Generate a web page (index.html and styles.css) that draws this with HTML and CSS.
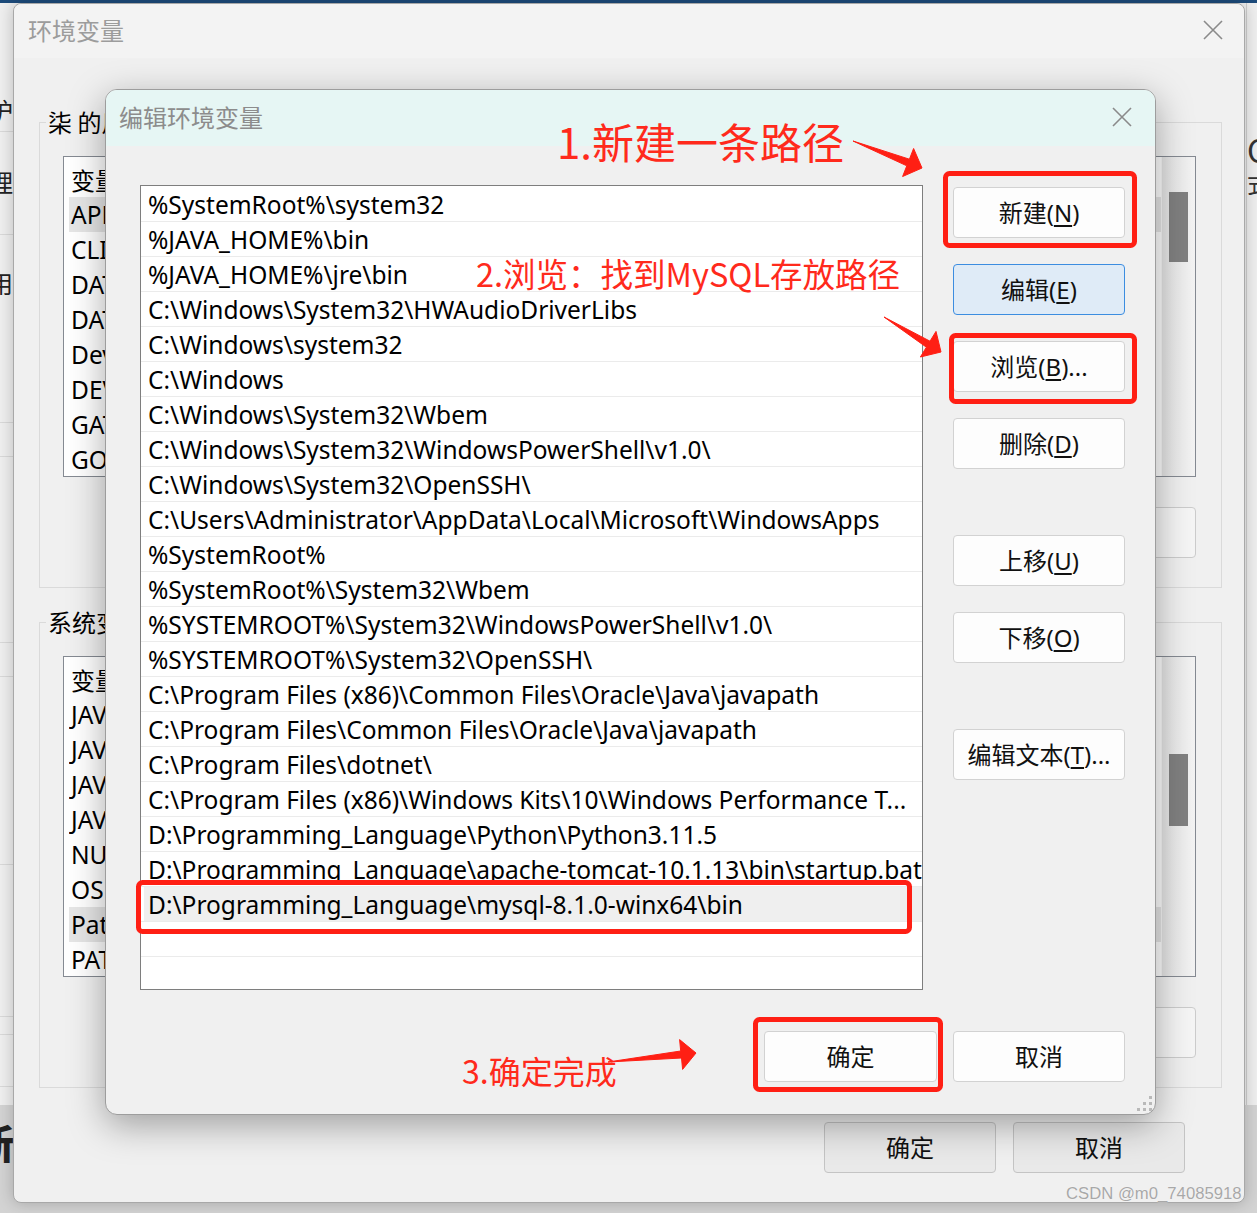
FILE: index.html
```html
<!DOCTYPE html>
<html lang="zh-CN">
<head>
<meta charset="utf-8">
<title>编辑环境变量</title>
<link rel="stylesheet" href="styles.css">
</head>
<body>
<div class="bgwin">
  <div class="bg-side">
    <div class="side-item si1"><span>护</span></div>
    <div class="side-item si2"><span>理</span></div>
    <div class="side-item si3"><span>用</span></div>
    <div class="side-item si4"></div>
    <div class="side-item si5"></div>
    <div class="side-item si6"></div>
    <div class="side-item si7"></div>
    <div class="side-item si8"></div>
    <div class="side-item si9"></div>
    <div class="side-item si10"></div>
  </div>
  <div class="bg-right">
    <span class="br1">C</span>
    <span class="br2">式</span>
  </div>
</div>
<span class="bg-bold">新</span>

<section class="win outer">
  <header class="titlebar">
    <span class="title">环境变量</span>
    <svg class="close" width="20" height="20" viewBox="0 0 20 20"><path d="M1 1L19 19M19 1L1 19"/></svg>
  </header>
  <div class="outer-body">
    <fieldset class="group">
      <legend>柒 的用户变量(<u>U</u>)</legend>
      <div class="group-inner">
        <div class="varlist">
          <div class="vl-rows">
            <div class="vl-row head"><span>变量</span><span>值</span></div>
            <div class="vl-row sel"><span>APPCODE</span><span>D:\JetBrains\AppCode\bin;</span></div>
            <div class="vl-row"><span>CLION</span><span>D:\JetBrains\CLion\bin;</span></div>
            <div class="vl-row"><span>DATAGRIP</span><span>D:\JetBrains\DataGrip\bin;</span></div>
            <div class="vl-row"><span>DATASPELL</span><span>D:\JetBrains\DataSpell\bin;</span></div>
            <div class="vl-row"><span>DevEco Studio</span><span>D:\Huawei\DevEco Studio\bin;</span></div>
            <div class="vl-row"><span>DEVECOSTUDIO</span><span>D:\Huawei\DevEco Studio\bin;</span></div>
            <div class="vl-row"><span>GATEWAY</span><span>D:\JetBrains\Gateway\bin;</span></div>
            <div class="vl-row"><span>GOLAND</span><span>D:\JetBrains\GoLand\bin;</span></div>
          </div>
          <div class="vscroll"><div class="thumb t1"></div></div>
        </div>
        <div class="group-btns">
          <button class="obtn">新建(<u>N</u>)...</button>
          <button class="obtn">编辑(<u>E</u>)...</button>
          <button class="obtn">删除(<u>D</u>)</button>
        </div>
      </div>
    </fieldset>
    <fieldset class="group">
      <legend>系统变量(<u>S</u>)</legend>
      <div class="group-inner">
        <div class="varlist">
          <div class="vl-rows">
            <div class="vl-row head"><span>变量</span><span>值</span></div>
            <div class="vl-row"><span>JAVA_HOME</span><span>D:\Java\jdk-17</span></div>
            <div class="vl-row"><span>JAVA_HOME11</span><span>D:\Java\jdk-11</span></div>
            <div class="vl-row"><span>JAVA_HOME17</span><span>D:\Java\jdk-17</span></div>
            <div class="vl-row"><span>JAVA_HOME8</span><span>D:\Java\jdk1.8</span></div>
            <div class="vl-row"><span>NUMBER_OF_PROCESSORS</span><span>16</span></div>
            <div class="vl-row"><span>OS</span><span>Windows_NT</span></div>
            <div class="vl-row sel"><span>Path</span><span>%SystemRoot%\system32;%JAVA_HOME%\bin</span></div>
            <div class="vl-row"><span>PATHEXT</span><span>.COM;.EXE;.BAT;.CMD;.VBS</span></div>
          </div>
          <div class="vscroll"><div class="thumb t2"></div></div>
        </div>
        <div class="group-btns">
          <button class="obtn">新建(<u>W</u>)...</button>
          <button class="obtn">编辑(<u>I</u>)...</button>
          <button class="obtn">删除(<u>L</u>)</button>
        </div>
      </div>
    </fieldset>
    <div class="outer-foot">
      <button class="obtn dim">确定</button>
      <button class="obtn dim">取消</button>
    </div>
  </div>
</section>

<section class="win dialog">
  <header class="titlebar">
    <span class="title">编辑环境变量</span>
    <svg class="close" width="20" height="20" viewBox="0 0 20 20"><path d="M1 1L19 19M19 1L1 19"/></svg>
  </header>
  <div class="dlg-body">
    <div class="pathlist">
      <div class="prow">%SystemRoot%\system32</div>
      <div class="prow">%JAVA_HOME%\bin</div>
      <div class="prow">%JAVA_HOME%\jre\bin</div>
      <div class="prow">C:\Windows\System32\HWAudioDriverLibs</div>
      <div class="prow">C:\Windows\system32</div>
      <div class="prow">C:\Windows</div>
      <div class="prow">C:\Windows\System32\Wbem</div>
      <div class="prow">C:\Windows\System32\WindowsPowerShell\v1.0\</div>
      <div class="prow">C:\Windows\System32\OpenSSH\</div>
      <div class="prow">C:\Users\Administrator\AppData\Local\Microsoft\WindowsApps</div>
      <div class="prow">%SystemRoot%</div>
      <div class="prow">%SystemRoot%\System32\Wbem</div>
      <div class="prow">%SYSTEMROOT%\System32\WindowsPowerShell\v1.0\</div>
      <div class="prow">%SYSTEMROOT%\System32\OpenSSH\</div>
      <div class="prow">C:\Program Files (x86)\Common Files\Oracle\Java\javapath</div>
      <div class="prow">C:\Program Files\Common Files\Oracle\Java\javapath</div>
      <div class="prow">C:\Program Files\dotnet\</div>
      <div class="prow">C:\Program Files (x86)\Windows Kits\10\Windows Performance T...</div>
      <div class="prow">D:\Programming_Language\Python\Python3.11.5</div>
      <div class="prow">D:\Programming_Language\apache-tomcat-10.1.13\bin\startup.bat</div>
      <div class="prow sel">D:\Programming_Language\mysql-8.1.0-winx64\bin</div>
      <div class="prow"></div>
      <div class="prow"></div>
    </div>
    <div class="side-btns">
      <button class="btn">新建(<u>N</u>)</button>
      <button class="btn focus">编辑(<u>E</u>)</button>
      <button class="btn">浏览(<u>B</u>)...</button>
      <button class="btn">删除(<u>D</u>)</button>
      <button class="btn sep">上移(<u>U</u>)</button>
      <button class="btn">下移(<u>O</u>)</button>
      <button class="btn sep">编辑文本(<u>T</u>)...</button>
    </div>
    <div class="dlg-foot">
      <button class="btn">确定</button>
      <button class="btn">取消</button>
    </div>
  </div>
  <svg class="grip" width="15" height="15" viewBox="0 0 15 15">
    <rect x="12" y="0" width="3" height="3"/>
    <rect x="6" y="6" width="3" height="3"/><rect x="12" y="6" width="3" height="3"/>
    <rect x="0" y="12" width="3" height="3"/><rect x="6" y="12" width="3" height="3"/><rect x="12" y="12" width="3" height="3"/>
  </svg>
</section>

<svg class="annot" width="1257" height="1213" viewBox="0 0 1257 1213">
  <g class="frames">
    <rect x="945.5" y="173.5" width="189" height="72" rx="4"/>
    <rect x="951.5" y="335.5" width="183" height="66" rx="4"/>
    <rect x="138.5" y="882.5" width="771" height="49" rx="4"/>
    <rect x="755.5" y="1019.5" width="185" height="70" rx="4"/>
  </g>
  <g class="arrows">
    <polygon points="853,141 909.4,159.2 913.6,148.5 922,168 902.6,176.5 906.8,165.8"/>
    <polygon points="884,317 930,341.2 936,331.4 941,352 920.4,357 926.4,347.2"/>
    <polygon points="608,1062 680.7,1051 679.6,1039.6 696,1053 682.6,1069.4 681.5,1058"/>
  </g>
</svg>
<span class="note n1">1.新建一条路径</span>
<span class="note n2">2.浏览：找到MySQL存放路径</span>
<span class="note n3">3.确定完成</span>
<span class="watermark">CSDN @m0_74085918</span>
</body>
</html>
```

FILE: styles.css
```css
* { box-sizing: border-box; }
html, body { margin: 0; padding: 0; }
body {
  position: relative;
  width: 1257px;
  height: 1213px;
  overflow: hidden;
  background: linear-gradient(#1d4b7b 0 3px, #d3d3d3 3px);
  font-family: "Noto Sans", "Noto Sans CJK SC", sans-serif;
  font-size: 24px;
  color: #000;
}
u { text-decoration-thickness: 1.5px; text-underline-offset: 3px; }

/* background window (behind everything) */
.bgwin {
  position: absolute;
  left: 0; top: 3px;
  width: 1257px; height: 1102px;
  background: #efefef;
}
.bg-side { width: 13px; overflow: hidden; display: flex; flex-direction: column; }
.side-item { border-bottom: 1px solid #d9d9d9; flex: none; font-family: "Noto Sans CJK SC", sans-serif; font-size: 24px; line-height: 30px; color: #222; white-space: nowrap; }
.side-item span { display: block; margin-left: -11px; }
.si1 { height: 129px; padding-top: 92px; }
.si2 { height: 103px; padding-top: 35px; }
.si3 { height: 188px; padding-top: 33px; }
.si4 { height: 34px; }
.si5 { height: 186px; }
.si6 { height: 34px; }
.si7 { height: 188px; }
.si8 { height: 152px; }
.si9 { height: 18px; }
.si10 { height: 52px; }
.bg-right {
  position: absolute; left: 1246px; top: 0; width: 11px; height: 100%;
  overflow: hidden; border-left: 1px solid #cfcfcf;
  display: flex; flex-direction: column;
  font-family: "Noto Sans CJK SC", sans-serif; color: #333;
}
.br1 { margin-top: 126px; font-size: 32px; line-height: 40px; }
.br2 { margin-top: 0; font-size: 24px; line-height: 28px; }
.bg-bold { position: absolute; left: -26px; top: 1118px; font-family: "Noto Sans CJK SC", sans-serif; font-weight: 900; font-size: 40px; line-height: 48px; color: #222; }

/* windows */
.win {
  position: absolute;
  display: flex;
  flex-direction: column;
  background: #f0f0f0;
}
.titlebar {
  flex: none;
  display: flex;
  align-items: center;
  justify-content: space-between;
}
.title { font-family: "Noto Sans CJK SC", sans-serif; font-size: 24px; line-height: 30px; }
.close { display: block; }
.close path { stroke: #8a8a8a; stroke-width: 1.6; fill: none; }

.outer {
  left: 13px; top: 3px;
  width: 1232px; height: 1200px;
  border: 1px solid #a8a8a8;
  border-radius: 8px;
  box-shadow: 0 0 16px rgba(0,0,0,.22);
}
.outer .titlebar {
  height: 54px;
  padding: 0 21px 3px 14px;
  background: #f3f3f3;
  border-radius: 8px 8px 0 0;
}
.outer .title { color: #9c9c9c; }
.outer-body { flex: 1; padding: 49px 22px 0 25px; display: flex; flex-direction: column; }

.group {
  margin: 0;
  min-width: 0;
  border: 1px solid #dadada;
  padding: 19px 25px 29px 6px;
}
.group + .group { margin-top: 19px; }
.group legend {
  padding: 0 2px;
  font-family: "Noto Sans CJK SC", sans-serif;
  font-size: 24px;
  line-height: 30px;
  white-space: nowrap;
}
.group-inner { margin-left: 17px; }
.varlist {
  height: 321px;
  display: flex;
  border: 1px solid #858a92;
  background: #fff;
}
.vl-rows { flex: 1; padding: 5px 0 0 5px; overflow: hidden; }
.vl-row {
  display: grid;
  grid-template-columns: 330px 1fr;
  height: 35px;
  line-height: 35px;
  padding-left: 2px;
  font-size: 24.5px;
  white-space: nowrap;
  overflow: hidden;
}
.vl-row.head span { font-family: "Noto Sans CJK SC", sans-serif; font-size: 24px; }
.vl-row.sel { background: #e6e6e6; }
.vscroll {
  width: 34px;
  flex: none;
  background: linear-gradient(to right, #e4e4e4, #f3f3f3);
  border-left: 1px solid #f7f7f7;
  padding-left: 7px;
}
.thumb { width: 19px; height: 70px; background: #808080; }
.t1 { margin-top: 35px; }
.t2 { margin-top: 97px; height: 72px; }
.group-btns { display: flex; justify-content: flex-end; gap: 16px; margin-top: 30px; }

.obtn, .btn {
  width: 172px;
  height: 51px;
  padding: 0;
  border-radius: 4px;
  font-family: "Noto Sans", "Noto Sans CJK SC", sans-serif;
  font-size: 24px;
  color: #111;
  line-height: 1;
}
.obtn { background: #f5f5f5; border: 1px solid #cccccc; }
.obtn.dim { background: #e9e9e9; border-color: #c4c4c4; }
.outer-foot { display: flex; justify-content: flex-end; gap: 17px; margin-top: 34px; padding-right: 37px; }

/* edit dialog */
.dialog {
  left: 105px; top: 89px;
  width: 1051px; height: 1026px;
  border: 1px solid #9d9d9d;
  border-radius: 12px;
  overflow: hidden;
  box-shadow: 0 10px 36px rgba(0,0,0,.34);
}
.dialog .titlebar {
  height: 56px;
  padding: 0 23px 3px 13px;
  background: #e6f6f4;
}
.dialog .title { color: #8c8c8c; }
.dlg-body {
  flex: 1;
  padding: 39px 30px 32px 34px;
  display: grid;
  grid-template-columns: 783px 172px;
  grid-template-rows: 805px 51px;
  column-gap: 30px;
  row-gap: 41px;
}
.pathlist {
  border: 1px solid #7e7e7e;
  background: #fff;
  padding-top: 1px;
  overflow: hidden;
}
.prow {
  height: 35px;
  line-height: 35px;
  border-bottom: 1px solid #ebebeb;
  padding: 0 6px 0 7px;
  font-size: 24.5px;
  white-space: nowrap;
  overflow: hidden;
}
.prow.sel { background: linear-gradient(to right, transparent 3px, #efefef 3px); }
.side-btns { display: flex; flex-direction: column; gap: 26px; padding-top: 2px; }
.side-btns .sep { margin-top: 40px; }
.btn { background: #fdfdfd; border: 1px solid #d2d2d2; }
.btn.focus { background: #dfebf7; border-color: #3c8de0; }
.dlg-foot { grid-column: 1 / 3; display: flex; justify-content: flex-end; gap: 16px; }
.dlg-foot .btn { width: 173px; }
.dlg-foot .btn + .btn { width: 172px; }
.grip { position: absolute; right: 3px; bottom: 3px; fill: #b9b9b9; }

/* annotations */
.annot { position: absolute; left: 0; top: 0; pointer-events: none; }
.frames rect { fill: none; stroke: #ff1f14; stroke-width: 5; }
.arrows polygon { fill: #ff1f14; stroke: #ff1f14; stroke-width: 1; stroke-linejoin: round; }
.note {
  position: absolute;
  font-family: "Noto Sans CJK SC", sans-serif;
  color: #ff2a1c;
  white-space: nowrap;
}
.n1 { left: 557px; top: 119px; font-size: 42px; line-height: 44px; }
.n2 { left: 476px; top: 256px; font-size: 32.5px; line-height: 34px; }
.n3 { left: 462px; top: 1053px; font-size: 32px; line-height: 34px; }
.watermark {
  position: absolute;
  left: 1066px; top: 1184px;
  font-family: "Liberation Sans", sans-serif;
  font-size: 16.7px;
  line-height: 20px;
  color: #a8a8a8;
  text-shadow: 0 0 1px #fff;
  white-space: nowrap;
}
```
